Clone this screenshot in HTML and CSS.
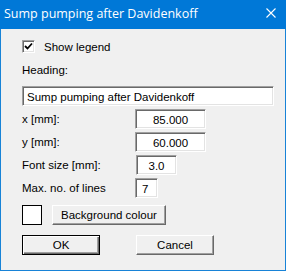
FILE: index.html
```html
<!DOCTYPE html>
<html lang="en">
<head>
  <meta charset="UTF-8">
  <title>Sump pumping after Davidenkoff</title>
  <link rel="stylesheet" href="styles.css">
</head>
<body>

<div class="window">
  <div class="titlebar">
    <span class="title">Sump pumping after Davidenkoff</span>
    <svg class="close" width="10" height="10" viewBox="0 0 10 10">
      <path d="M0.5 0.5 L9.5 9.5 M9.5 0.5 L0.5 9.5" stroke="#fff" stroke-width="1.1" fill="none"/>
    </svg>
  </div>

  <div class="content">
    <div class="check-row">
      <span class="checkbox">
        <svg width="9" height="9" viewBox="0 0 9 9">
          <path d="M1 4 L3.5 6.5 L8 1.5" stroke="#000" stroke-width="1.8" fill="none"/>
        </svg>
      </span>
      <span>Show legend</span>
    </div>

    <div class="heading-label">Heading:</div>
    <div class="field wide">Sump pumping after Davidenkoff</div>

    <div class="row">
      <span class="label">x [mm]:</span>
      <div class="field num">85.000</div>
    </div>
    <div class="row">
      <span class="label">y [mm]:</span>
      <div class="field num">60.000</div>
    </div>
    <div class="row">
      <span class="label">Font size [mm]:</span>
      <div class="field small">3.0</div>
    </div>
    <div class="row">
      <span class="label">Max. no. of lines</span>
      <div class="field tiny">7</div>
    </div>

    <div class="colour-row">
      <span class="swatch"></span>
      <span class="btn colour-btn">Background colour</span>
    </div>

    <div class="button-row">
      <span class="btn default">OK</span>
      <span class="btn">Cancel</span>
    </div>
  </div>
</div>

</body>
</html>
```

FILE: styles.css
```css
body {
  margin: 0;
  padding: 0;
  background: #f0f0f0;
  font-family: 'Liberation Sans', Arial, sans-serif;
  font-size: 11.5px;
  color: #000;
}
.window {
  width: 286px;
  height: 271px;
  box-sizing: border-box;
  border: 1px solid #1883d7;
  border-top: none;
  background: #f0f0f0;
}
.titlebar {
  height: 29px;
  background: #0078d7;
  color: white;
  display: flex;
  align-items: center;
  justify-content: space-between;
  padding: 0 10px 0 4px;
  margin: 0 -1px;
}
.title {
  font-family: 'Open Sans', 'Liberation Sans', sans-serif;
  font-size: 12.5px;
  margin-top: -3px;
}
.close {
  margin-top: -3px;
}
.content {
  padding: 11px 0 0 21px;
}
.check-row {
  display: flex;
  align-items: center;
  gap: 9px;
  height: 13px;
}
.checkbox {
  width: 13px;
  height: 13px;
  box-sizing: border-box;
  border: 1px solid #a0a0a0;
  border-right-color: #fff;
  border-bottom-color: #fff;
  box-shadow: inset 1px 1px #696969, inset -1px -1px #e3e3e3;
  background: #fff;
  display: flex;
  align-items: center;
  justify-content: center;
}
.heading-label {
  margin-top: 11px;
  height: 14px;
}
.field {
  height: 20px;
  box-sizing: border-box;
  border: 1px solid #a0a0a0;
  border-right-color: #fff;
  border-bottom-color: #fff;
  box-shadow: inset 1px 1px #696969, inset -1px -1px #e3e3e3;
  background: #fff;
  padding: 3px 0 0 4px;
  line-height: 14px;
}
.wide {
  width: 252px;
  margin-top: 8px;
}
.row {
  display: flex;
  align-items: center;
  margin-top: 3px;
}
.label {
  width: 113px;
}
.num {
  width: 71px;
  padding-left: 0;
  text-align: center;
}
.small {
  width: 41px;
  margin-left: 1px;
  padding-left: 0;
  text-align: center;
}
.tiny {
  width: 23px;
  padding-left: 6px;
}
.colour-row {
  display: flex;
  align-items: center;
  gap: 10px;
  margin-top: 7px;
}
.swatch {
  width: 20px;
  height: 20px;
  box-sizing: border-box;
  border: 1px solid #000;
  background: #fff;
}
.btn {
  height: 20px;
  box-sizing: border-box;
  border: 1px solid #fff;
  border-right-color: #696969;
  border-bottom-color: #696969;
  box-shadow: inset -1px -1px #a0a0a0;
  background: #f0f0f0;
  display: flex;
  align-items: center;
  justify-content: center;
}
.colour-btn {
  width: 114px;
}
.button-row {
  display: flex;
  gap: 36px;
  margin-top: 10px;
}
.button-row .btn {
  width: 78px;
}
.default {
  border: 1px solid #000;
  box-shadow: inset 1px 1px #fff, inset -1px -1px #696969, inset -2px -2px #a0a0a0;
}
```
